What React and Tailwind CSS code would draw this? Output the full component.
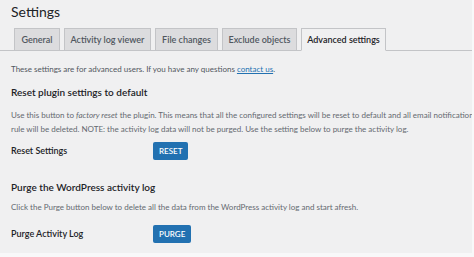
const tabs = [
  { label: 'General', w: 'w-[46px]' },
  { label: 'Activity log viewer', w: 'w-[87px]' },
  { label: 'File changes', w: 'w-[63px]' },
  { label: 'Exclude objects', w: 'w-[75px]' },
  { label: 'Advanced settings', w: 'w-[85px]', active: true },
];

function Row({ label, button }) {
  return (
    <div className="flex items-center h-[18px]">
      <div className="w-[142px] text-[9px] font-semibold text-[#1d2327]">{label}</div>
      <button className="h-[18px] px-[6px] rounded-[2px] bg-[#2271b1] text-white text-[8px] font-semibold">
        {button}
      </button>
    </div>
  );
}

export default function App() {
  return (
    <div className="w-[474px] h-[257px] bg-[#f8f8f9]">
      <div
        className="w-[472px] h-[253px] overflow-hidden bg-[#f0f0f1] text-[#1d2327]"
        style={{ fontFamily: 'Lato, "Open Sans", sans-serif' }}
      >
        <div className="pl-[11px]">
          {/* Title */}
          <h1 className="h-[26px] pt-[1px] text-[14px] leading-[22px] font-normal text-[#1d2327]">Settings</h1>

          {/* Tabs */}
          <div className="flex items-end h-[25px] border-b border-[#c3c4c7] -ml-[11px] pl-[14px]">
            {tabs.map((t) => (
              <div
                key={t.label}
                className={`${t.w} mr-[4px] h-[23px] -mb-px flex items-center justify-center border border-[#c3c4c7] text-[9px] font-semibold whitespace-nowrap ${
                  t.active ? 'bg-[#f0f0f1] border-b-[#f0f0f1] text-[#1d2327]' : 'bg-[#dcdcde] text-[#50575e]'
                }`}
              >
                {t.label}
              </div>
            ))}
          </div>

          <p className="mt-[11px] text-[8px] leading-[14px] text-[#50575e] whitespace-nowrap">
            These settings are for advanced users. If you have any questions{' '}
            <a href="#" className="text-[#2271b1] underline">contact us</a>.
          </p>

          {/* Reset section */}
          <h2 className="mt-[7px] text-[10px] leading-[18px] font-semibold text-[#1d2327]">Reset plugin settings to default</h2>
          <div className="mt-[7px] text-[8px] leading-[14px] text-[#646970] whitespace-nowrap">
            <p>
              Use this button to <em>factory reset</em> the plugin. This means that all the configured settings will be
              reset to default and all email notifications
            </p>
            <p>rule will be deleted. NOTE: the activity log data will not be purged. Use the setting below to purge the activity log.</p>
          </div>
          <div className="mt-[6px]">
            <Row label="Reset Settings" button="RESET" />
          </div>

          {/* Purge section */}
          <h2 className="mt-[18px] text-[10px] leading-[18px] font-semibold text-[#1d2327]">Purge the WordPress activity log</h2>
          <p className="mt-[4px] text-[8px] leading-[14px] text-[#646970] whitespace-nowrap">
            Click the Purge button below to delete all the data from the WordPress activity log and start afresh.
          </p>
          <div className="mt-[11px]">
            <Row label="Purge Activity Log" button="PURGE" />
          </div>
        </div>
      </div>
    </div>
  );
}
